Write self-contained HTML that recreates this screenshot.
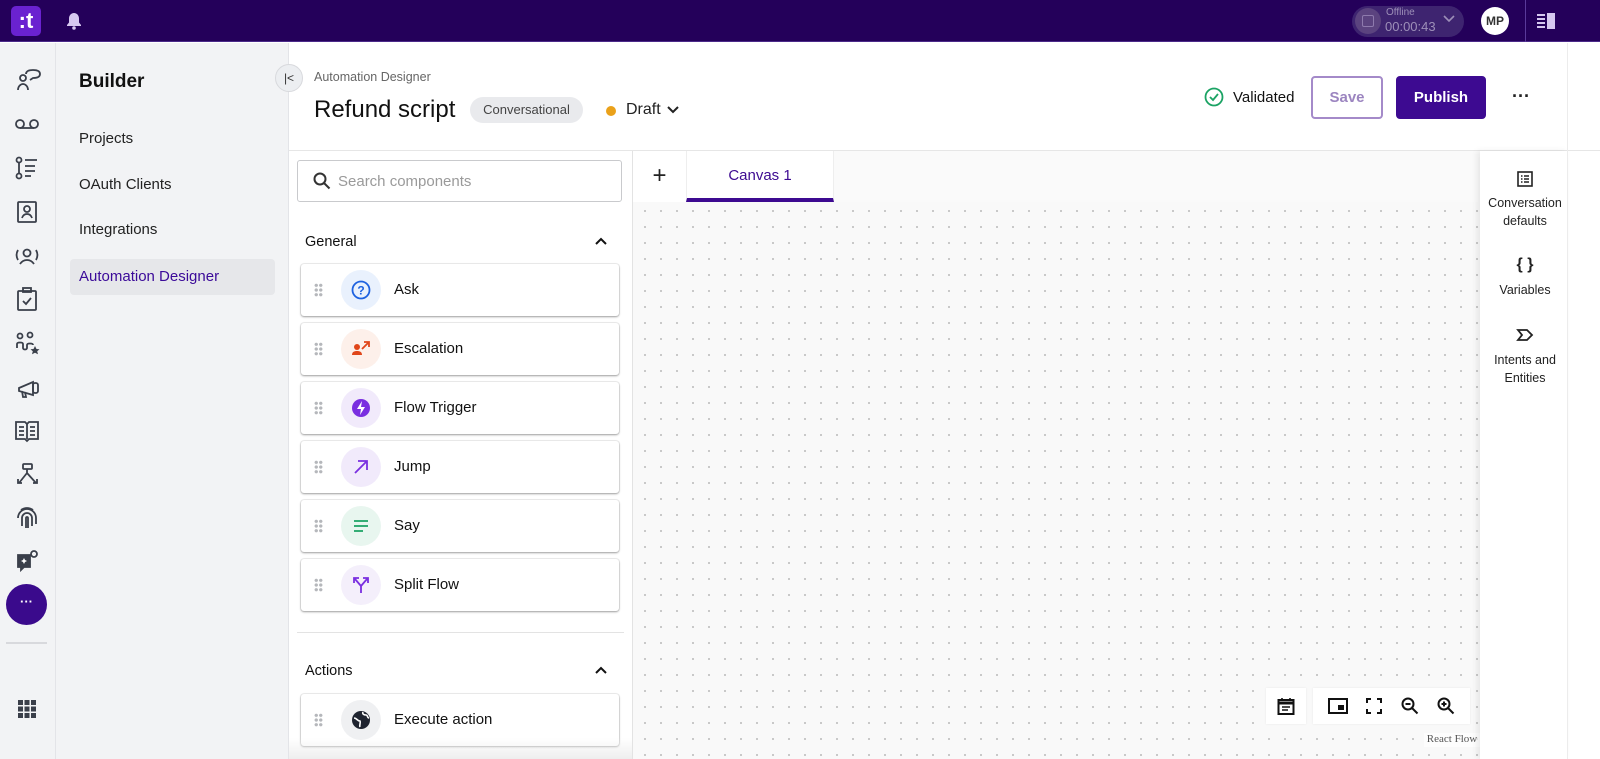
<!DOCTYPE html>
<html><head><meta charset="utf-8">
<style>
*{box-sizing:border-box;margin:0;padding:0}
body{width:1600px;height:759px;overflow:hidden;font-family:"Liberation Sans",sans-serif;background:#fff;position:relative;color:#1a1a1a}
.abs{position:absolute}
.top{left:0;top:0;width:1600px;height:42px;background:#24005a;border-bottom:1px solid #4b2a8a}
.rail{left:0;top:43px;width:56px;height:716px;background:#f2f3f5;border-right:1px solid #e3e4e8}
.nav{left:56px;top:43px;width:233px;height:716px;background:#f2f3f5;border-right:1px solid #e3e4e8}
.nav .it{position:absolute;left:14px;width:205px;height:36px;line-height:36px;padding-left:9px;font-size:15px;color:#222}
.card{position:absolute;left:301px;width:318px;height:52px;background:#fff;border-radius:3px;box-shadow:0 1px 2px rgba(0,0,0,.35),0 0 0 1px rgba(0,0,0,.06)}
.card .dr{position:absolute;left:13px;top:19px;width:9px;height:14px;background:radial-gradient(circle,#b5b7bb 1.5px,transparent 1.8px) 0 0/4.5px 4.7px}
.card .ci{position:absolute;left:40px;top:6px;width:40px;height:40px;border-radius:50%;display:flex;align-items:center;justify-content:center}
.card .t{position:absolute;left:93px;top:17px;font-size:15px;color:#111}
.canvas{left:633px;top:151px;width:847px;height:608px;background-color:#f9f9f9;background-image:radial-gradient(circle,#a9a9a9 0.7px,transparent 1px);background-size:16px 16px;background-position:4px 4px}
.rp{font-size:12.5px;color:#222;text-align:center;width:88px;left:1481px;line-height:18px}
.ctl{background:#fff;height:36px;top:688px;display:flex;align-items:center;justify-content:center;box-shadow:0 0 2px rgba(0,0,0,.08)}
</style></head><body>

<div class="abs top"></div>
<div class="abs" style="left:11px;top:6px;width:30px;height:30px;border-radius:5px;background:#6a22d0;color:#fff;font-weight:bold;font-size:22px;line-height:29px;text-align:center">:t</div>
<svg class="abs" style="left:65px;top:11px" width="18" height="20" viewBox="0 0 18 20"><path d="M9 2c-3 0-5 2.5-5 5.5v4L2 14v1h14v-1l-2-2.5v-4C14 4.5 12 2 9 2z" fill="#d6c8f0"/><circle cx="9" cy="17" r="1.8" fill="#d6c8f0"/></svg>
<div class="abs" style="left:1352px;top:6px;width:112px;height:31px;border-radius:16px;background:#3e2470"></div>
<div class="abs" style="left:1355px;top:8px;width:26px;height:26px;border-radius:50%;background:#5b437f"></div>
<div class="abs" style="left:1362px;top:15px;width:12px;height:12px;border:1.5px solid #8e7aad;border-radius:2px"></div>
<div class="abs" style="left:1386px;top:7px;font-size:10px;color:#9d8fb8">Offline</div>
<div class="abs" style="left:1385px;top:19px;font-size:13px;color:#9d8fb8">00:00:43</div>
<svg class="abs" style="left:1443px;top:15px" width="12" height="8"><path d="M1 1l5 5 5-5" stroke="#9d8fb8" stroke-width="1.6" fill="none"/></svg>
<div class="abs" style="left:1481px;top:7px;width:28px;height:28px;border-radius:50%;background:#fff;color:#333;font-size:12px;font-weight:bold;text-align:center;line-height:28px">MP</div>
<div class="abs" style="left:1525px;top:0;width:1px;height:42px;background:#5a3a9a"></div>
<div class="abs" style="left:1537px;top:14px;width:8px;height:2px;background:#d6c8f0;box-shadow:0 4px 0 #d6c8f0,0 8px 0 #d6c8f0,0 12px 0 #d6c8f0"></div>
<div class="abs" style="left:1547px;top:13px;width:8px;height:16px;background:#d6c8f0"></div>

<div class="abs rail"></div>
<svg class="abs" style="left:0;top:60px" width="56" height="690" viewBox="0 0 56 690" fill="none" stroke="#3a3f4a" stroke-width="1.8">
<g transform="translate(16,10)"><circle cx="7" cy="8" r="3"/><path d="M2 20c0-4 3-6 5-6s5 2 5 6"/><path d="M10 4c0-3 3-4 7-4s7 1 7 4-3 4-7 4l-3 2"/></g>
<g transform="translate(15,58)"><circle cx="5" cy="6" r="4"/><circle cx="19" cy="6" r="4"/><path d="M5 10h14"/></g>
<g transform="translate(16,97)"><circle cx="3" cy="3" r="2.5"/><circle cx="3" cy="19" r="2.5"/><path d="M3 5v12M9 3h12M9 9h10M9 14h10M9 19h6"/></g>
<g transform="translate(16,141)"><rect x="2" y="1" width="18" height="20" rx="1"/><circle cx="11" cy="8" r="3"/><path d="M6 17c1-3 3-4 5-4s4 1 5 4"/></g>
<g transform="translate(15,184)"><circle cx="12" cy="9" r="3.5"/><path d="M5 20c2-3 4-4 7-4s5 1 7 4M3 6a10 10 0 0 0 0 10M21 6a10 10 0 0 1 0 10"/></g>
<g transform="translate(17,228)"><rect x="1" y="3" width="18" height="19" rx="1"/><rect x="6" y="0" width="8" height="4"/><path d="M6 13l3 3 5-6"/></g>
<g transform="translate(15,272)"><circle cx="5" cy="4" r="2.5"/><circle cx="15" cy="3" r="2.5"/><path d="M2 16v-4c0-2 6-2 6 0v4c0 2 4 2 4 0v-3c0-2 6-2 6 0"/><path d="M20 14l1.5 3 3 .3-2.3 2 .8 3-3-1.6-3 1.6.8-3-2.3-2 3-.3z" fill="#3a3f4a" stroke="none"/></g>
<g transform="translate(15,318)"><path d="M4 10l14-6v13L4 13z"/><rect x="18" y="5" width="5" height="10" rx="2"/><path d="M7 13l1 6h3l-1-5"/></g>
<g transform="translate(15,360)"><path d="M1 2h9l2 2 2-2h9v17h-9l-2 2-2-2H1z"/><path d="M12 4v15M4 7h5M4 11h5M4 15h5M15 7h5M15 11h5M15 15h5"/></g>
<g transform="translate(15,403)"><rect x="8" y="1" width="9" height="5" rx="1"/><path d="M12 6v4M12 10l-8 10M12 10l9 10M3 16v4h4M22 16v4h-4"/></g>
<g transform="translate(15,446)"><path d="M3 12a9 9 0 0 1 18 0v6M7 20v-8a5 5 0 0 1 10 0v8M11 22V12a1 1 0 0 1 2 0v10M6 4a10 10 0 0 1 12 0"/></g>
<g transform="translate(16,490)"><path d="M2 5h12v12H8l-3 3v-3H2z" fill="#3a3f4a"/><path d="M8 8l1 2 2 1-2 1-1 2-1-2-2-1 2-1z" fill="#fff" stroke="none"/><circle cx="18" cy="4" r="3"/></g>
</svg>
<div class="abs" style="left:6px;top:584px;width:41px;height:41px;border-radius:50%;background:#3a0a8c;color:#fff;text-align:center;line-height:36px;font-weight:bold;font-size:13px">···</div>
<div class="abs" style="left:6px;top:642px;width:41px;height:2px;background:#d8d9dd"></div>
<svg class="abs" style="left:18px;top:700px" width="18" height="18"><g fill="#3a3f4a"><rect x="0" y="0" width="5" height="5"/><rect x="6.5" y="0" width="5" height="5"/><rect x="13" y="0" width="5" height="5"/><rect x="0" y="6.5" width="5" height="5"/><rect x="6.5" y="6.5" width="5" height="5"/><rect x="13" y="6.5" width="5" height="5"/><rect x="0" y="13" width="5" height="5"/><rect x="6.5" y="13" width="5" height="5"/><rect x="13" y="13" width="5" height="5"/></g></svg>

<div class="abs nav">
<div style="position:absolute;left:23px;top:28px;font-size:19px;font-weight:bold;color:#111">Builder</div>
<div class="it" style="top:78px">Projects</div>
<div class="it" style="top:124px">OAuth Clients</div>
<div class="it" style="top:169px">Integrations</div>
<div class="it" style="top:216px;background:#e6e7ea;border-radius:4px;color:#3b0a99">Automation Designer</div>
</div>
<div class="abs" style="left:275px;top:64px;width:28px;height:28px;border-radius:50%;background:#eceef1;border:1px solid #d8d9dd;font-size:12px;text-align:center;line-height:26px;color:#333">|&lt;</div>

<div class="abs" style="left:314px;top:70px;font-size:12.5px;color:#666">Automation Designer</div>
<div class="abs" style="left:314px;top:96px;font-size:24px;color:#111">Refund script</div>
<div class="abs" style="left:470px;top:97px;width:113px;height:26px;border-radius:13px;background:#e9eaed;font-size:13px;color:#444;text-align:center;line-height:26px">Conversational</div>
<div class="abs" style="left:606px;top:106px;width:10px;height:10px;border-radius:50%;background:#eaa11a"></div>
<div class="abs" style="left:626px;top:101px;font-size:16px;color:#222">Draft</div>
<svg class="abs" style="left:666px;top:105px" width="14" height="10"><path d="M2 2l5 5 5-5" stroke="#222" stroke-width="2" fill="none"/></svg>
<svg class="abs" style="left:1204px;top:87px" width="20" height="20"><circle cx="10" cy="10" r="8.5" stroke="#1ba364" stroke-width="1.8" fill="none"/><path d="M6 10l3 3 5-6" stroke="#1ba364" stroke-width="1.8" fill="none"/></svg>
<div class="abs" style="left:1233px;top:89px;font-size:15px;color:#111">Validated</div>
<div class="abs" style="left:1311px;top:76px;width:72px;height:43px;border:2px solid #a48ac9;border-radius:4px;text-align:center;line-height:39px;font-size:15px;font-weight:bold;color:#9c85c0">Save</div>
<div class="abs" style="left:1396px;top:76px;width:90px;height:43px;background:#3d0a91;border-radius:4px;text-align:center;line-height:43px;font-size:15px;font-weight:bold;color:#fff">Publish</div>
<div class="abs" style="left:1512px;top:86px;font-size:18px;font-weight:bold;color:#222">···</div>
<div class="abs" style="left:289px;top:150px;width:1311px;height:1px;background:#e6e6e6"></div>

<div class="abs" style="left:297px;top:160px;width:325px;height:42px;border:1.5px solid #c9cacd;border-radius:3px"></div>
<svg class="abs" style="left:313px;top:172px" width="18" height="18"><circle cx="7" cy="7" r="5.5" stroke="#333" stroke-width="2" fill="none"/><path d="M11 11l5.5 5.5" stroke="#333" stroke-width="2"/></svg>
<div class="abs" style="left:338px;top:173px;font-size:15px;color:#9a9a9a">Search components</div>
<div class="abs" style="left:305px;top:234px;font-size:14.5px;color:#111">General</div>
<svg class="abs" style="left:594px;top:236px" width="14" height="10"><path d="M2 8l5-5 5 5" stroke="#111" stroke-width="2" fill="none"/></svg>

<div class="card" style="top:264px"><div class="dr"></div><div class="ci" style="background:#e9f1fd"><svg width="20" height="20"><circle cx="10" cy="10" r="8.5" stroke="#1e62e0" stroke-width="1.8" fill="none"/><text x="10" y="14.5" font-size="12" font-weight="bold" fill="#1e62e0" text-anchor="middle" font-family="Liberation Sans">?</text></svg></div><div class="t">Ask</div></div>
<div class="card" style="top:323px"><div class="dr"></div><div class="ci" style="background:#fdf0ea"><svg width="20" height="20"><circle cx="6" cy="8" r="3" fill="#e0461a"/><path d="M1 16c0-3 2-4 5-4s5 1 5 4z" fill="#e0461a"/><path d="M11 10l7-7M13 3h5v5" stroke="#e0461a" stroke-width="1.8" fill="none"/></svg></div><div class="t">Escalation</div></div>
<div class="card" style="top:382px"><div class="dr"></div><div class="ci" style="background:#f1eafb"><svg width="20" height="20"><circle cx="10" cy="10" r="9" fill="#7a2fe0"/><path d="M11 3l-5 8h4l-1 6 5-8h-4z" fill="#fff"/></svg></div><div class="t">Flow Trigger</div></div>
<div class="card" style="top:441px"><div class="dr"></div><div class="ci" style="background:#f1eafb"><svg width="20" height="20"><path d="M4 16L16 4M7 4h9v9" stroke="#7a2fe0" stroke-width="1.8" fill="none"/></svg></div><div class="t">Jump</div></div>
<div class="card" style="top:500px"><div class="dr"></div><div class="ci" style="background:#e8f6ef"><svg width="20" height="20"><path d="M3 5h14M3 10h14M3 15h9" stroke="#1ba364" stroke-width="1.8"/></svg></div><div class="t">Say</div></div>
<div class="card" style="top:559px"><div class="dr"></div><div class="ci" style="background:#f4effb"><svg width="20" height="20"><path d="M10 18v-7L4 4M10 11l6-7M3 8V3h5M12 3h5v5" stroke="#7a2fe0" stroke-width="1.8" fill="none"/></svg></div><div class="t">Split Flow</div></div>
<div class="abs" style="left:297px;top:632px;width:327px;height:1px;background:#e3e3e3"></div>
<div class="abs" style="left:305px;top:663px;font-size:14.5px;color:#111">Actions</div>
<svg class="abs" style="left:594px;top:665px" width="14" height="10"><path d="M2 8l5-5 5 5" stroke="#111" stroke-width="2" fill="none"/></svg>
<div class="card" style="top:694px"><div class="dr"></div><div class="ci" style="background:#eff0f2"><svg width="22" height="22"><circle cx="11" cy="11" r="9" fill="#1f2430"/><path d="M4 9c3 0 3 3 6 3 1 2-1 4 0 6M13 3c-1 2 1 3 3 3s1 3 3 3" stroke="#fff" stroke-width="1.6" fill="none"/></svg></div><div class="t">Execute action</div></div>
<div class="abs" style="left:289px;top:738px;width:343px;height:21px;background:linear-gradient(#fff0,#eee)"></div>
<div class="abs" style="left:632px;top:151px;width:1px;height:608px;background:#e3e3e3"></div>

<div class="abs canvas"></div>
<div class="abs" style="left:633px;top:151px;width:847px;height:51px;background:#fafafa"></div>
<div class="abs" style="left:633px;top:151px;width:53px;height:51px;background:#fff;font-size:24px;text-align:center;line-height:50px;color:#222">+</div>
<div class="abs" style="left:686px;top:151px;width:148px;height:51px;background:#fff;border-left:1px solid #eee;border-right:1px solid #eee;border-bottom:4px solid #3d0a91;text-align:center;line-height:50px;font-size:15px;color:#3d0a91">Canvas 1</div>
<div class="abs ctl" style="left:1266px;width:40px"><svg width="18" height="18"><rect x="1.5" y="3" width="15" height="14" stroke="#111" stroke-width="2" fill="none"/><path d="M1.5 6h15" stroke="#111" stroke-width="3"/><path d="M5 1v3M13 1v3M5 10h8M5 13h6" stroke="#111" stroke-width="1.6"/></svg></div>
<div class="abs ctl" style="left:1313px;width:157px;justify-content:space-around;padding:0 6px">
<svg width="20" height="16"><rect x="1" y="1" width="18" height="14" stroke="#111" stroke-width="2" fill="none"/><rect x="10" y="7" width="6" height="5" fill="#111"/></svg>
<svg width="16" height="16"><path d="M1 5V1h4M11 1h4v4M15 11v4h-4M5 15H1v-4" stroke="#111" stroke-width="2" fill="none"/></svg>
<svg width="18" height="18"><circle cx="7" cy="7" r="5.5" stroke="#111" stroke-width="2" fill="none"/><path d="M11 11l5.5 5.5M4.5 7h5" stroke="#111" stroke-width="2"/></svg>
<svg width="18" height="18"><circle cx="7" cy="7" r="5.5" stroke="#111" stroke-width="2" fill="none"/><path d="M11 11l5.5 5.5M4.5 7h5M7 4.5v5" stroke="#111" stroke-width="2"/></svg>
</div>
<div class="abs" style="left:1424px;top:733px;width:56px;height:14px;background:rgba(255,255,255,.6);font-family:'Liberation Serif',serif;font-size:11px;color:#555;text-align:center">React Flow</div>

<div class="abs" style="left:1480px;top:151px;width:88px;height:608px;background:#fff;box-shadow:-3px 0 6px rgba(0,0,0,.08)"></div>
<div class="abs" style="left:1567px;top:43px;width:1px;height:716px;background:#ececec"></div>
<svg class="abs" style="left:1517px;top:171px" width="16" height="16"><rect x="1" y="1" width="14" height="14" stroke="#222" stroke-width="1.6" fill="none"/><path d="M4 5h1.5M7 5h5M4 8h1.5M7 8h5M4 11h1.5M7 11h5" stroke="#222" stroke-width="1.4"/></svg>
<div class="abs rp" style="top:194px">Conversation<br>defaults</div>
<div class="abs rp" style="top:256px;font-size:16px;font-weight:bold">{ }</div>
<div class="abs rp" style="top:281px">Variables</div>
<svg class="abs" style="left:1516px;top:328px" width="18" height="14"><path d="M2 2h9l5 5-5 5H2l4-5z" stroke="#222" stroke-width="1.8" fill="none"/></svg>
<div class="abs rp" style="top:351px">Intents and<br>Entities</div>
</body></html>
